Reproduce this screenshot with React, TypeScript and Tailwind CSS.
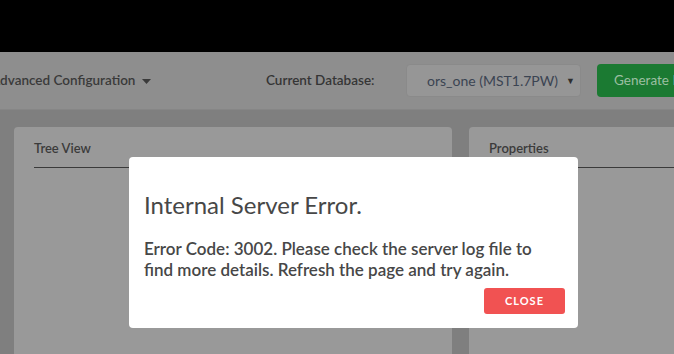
import React from 'react';

function Caret() {
  return (
    <svg width="9" height="5" viewBox="0 0 9 5" className="ml-[7px] mt-[2px]">
      <path d="M0 0 L9 0 L4.5 5 Z" fill="#3a3a3a" />
    </svg>
  );
}

function Panel({ title, lineRight }: { title: string; lineRight: boolean }) {
  return (
    <div className="h-full bg-[#999999] rounded-t-[4px] px-[20px] pt-[12px]">
      <div className={`text-[13px] font-semibold text-[#3b3b3b] pb-[8px] border-b border-[#3a3a3a] ${lineRight ? '-mr-[20px]' : ''}`}>
        {title}
      </div>
    </div>
  );
}

export default function App() {
  return (
    <div className="relative w-[674px] h-[354px] overflow-hidden bg-[#7f7f7f] font-['Lato',sans-serif]">
      <div className="h-[52px] bg-black" />

      {/* header */}
      <div className="h-[58px] bg-[#8e8e8e] border-b border-[#868686] flex items-center whitespace-nowrap">
        <div className="w-[266px] shrink-0 flex items-center">
          <div className="flex items-center -ml-[9px] text-[13.5px] font-semibold text-[#3a3a3a]">
            Advanced Configuration
            <Caret />
          </div>
        </div>
        <div className="w-[140px] shrink-0 text-[13.5px] font-semibold text-[#353535]">Current Database:</div>
        <div className="w-[175px] shrink-0 h-[33px] rounded-[4px] border border-[#8a8a8a] bg-[#969696] flex items-center justify-between pl-[20px] pr-[5px]">
          <span className="text-[14px] text-[#3b4452]">ors_one (MST1.7PW)</span>
          <span className="text-[9px] text-[#2e2e2e]">▼</span>
        </div>
        <div className="ml-[16px] h-[33px] -mt-[1px] w-[120px] shrink-0 rounded-[4px] bg-[#1b7a32] flex items-center pl-[17px] text-[13.5px] text-[#9cbfa2]">
          Generate BVT
        </div>
      </div>

      {/* content */}
      <div className="flex gap-[17px] pl-[14px] pt-[17px] h-[244px]">
        <div className="w-[438px] shrink-0">
          <Panel title="Tree View" lineRight={false} />
        </div>
        <div className="w-[230px] shrink-0">
          <Panel title="Properties" lineRight={true} />
        </div>
      </div>

      {/* modal */}
      <div className="absolute left-[129px] top-[157px] w-[449px] h-[171px] bg-white rounded-[4px] px-[15px] pt-[33px]">
        <div className="text-[24px] leading-[30px] text-[#474747]">Internal Server Error.</div>
        <div className="mt-[18px] text-[17px] leading-[21px] font-semibold text-[#474747]">
          Error Code: 3002. Please check the server log file to find more details. Refresh the page and try again.
        </div>
        <div className="flex justify-end mt-[8px]">
          <button className="w-[81px] h-[26px] mr-[-2px] rounded-[3px] bg-[#f15252] text-white text-[11px] font-bold tracking-[1px]">
            CLOSE
          </button>
        </div>
      </div>
    </div>
  );
}
